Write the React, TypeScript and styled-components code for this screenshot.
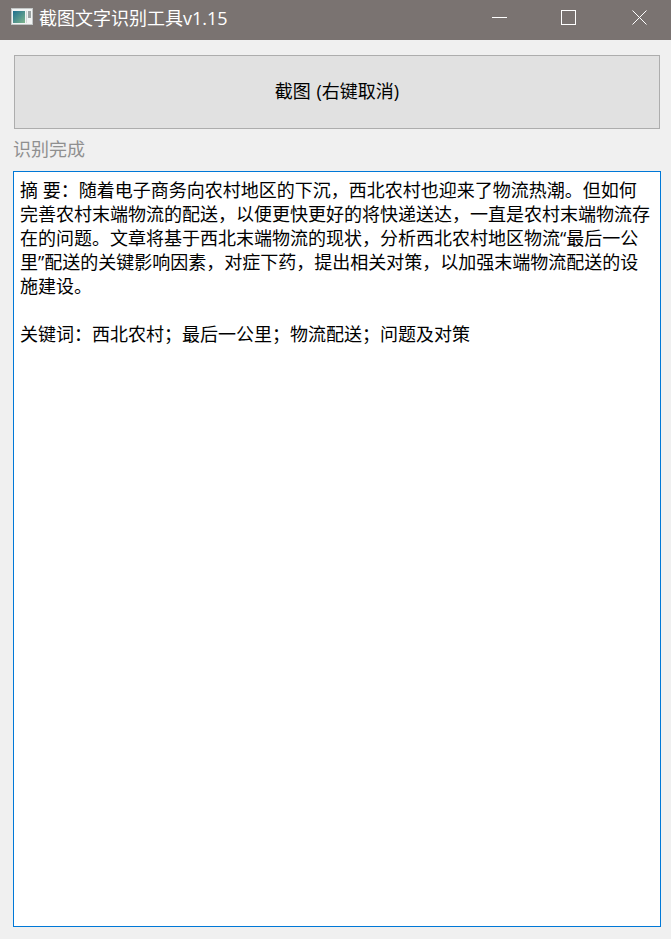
import React from "react";
import styled, { createGlobalStyle } from "styled-components";

const GlobalStyle = createGlobalStyle`
    html, body {
        margin: 0;
        padding: 0;
        height: 100%;
    }
    body {
        background: #f0f0f0;
        font-family: "Open Sans", "Noto Sans CJK SC", sans-serif;
    }
`;

const Window = styled.div`
    width: 671px;
    height: 939px;
    display: flex;
    flex-direction: column;
    background: #f0f0f0;
    overflow: hidden;
`;

const TitleBar = styled.div`
    height: 40px;
    flex: none;
    display: flex;
    align-items: flex-start;
    background: #7a7371;
    color: #ffffff;
`;

const AppIcon = styled.svg`
    width: 22px;
    height: 17px;
    margin: 8px 0 0 11px;
    flex: none;
`;

const Title = styled.div`
    margin: 6px 0 0 6px;
    flex: 1;
    font-size: 18px;
    line-height: 24px;
    white-space: nowrap;
`;

const WindowButtons = styled.div`
    display: flex;
    gap: 54px;
    padding: 10px 24px 0 0;
`;

const WindowGlyph = styled.svg`
    width: 15px;
    height: 15px;
    display: block;
`;

const MaximizeGlyph = styled(WindowGlyph)`
    margin-right: 2px;
`;

const Content = styled.div`
    flex: 1;
    display: flex;
    flex-direction: column;
    padding: 15px 10px 12px 13px;
    min-height: 0;
`;

const CaptureButton = styled.button`
    height: 74px;
    flex: none;
    margin: 0 1px;
    border: 1px solid #adadad;
    background: #e1e1e1;
    color: #000000;
    font-family: inherit;
    font-size: 18px;
    line-height: 24px;
    word-spacing: 1px;
    padding: 0 0 2px;
`;

const Status = styled.div`
    height: 24px;
    margin-top: 8px;
    margin-bottom: 1px;
    flex: none;
    font-size: 18px;
    line-height: 24px;
    color: #8f8f8f;
`;

const TextPanel = styled.div`
    flex: 1;
    margin-top: 9px;
    min-height: 0;
    box-sizing: border-box;
    border: 1px solid #0078d7;
    background: #ffffff;
    padding: 6px;
    color: #000000;
    font-size: 18px;
    line-height: 24px;
`;

const Line = styled.div`
    min-height: 24px;
    white-space: nowrap;
`;

const lines = [
    "摘 要：随着电子商务向农村地区的下沉，西北农村也迎来了物流热潮。但如何",
    "完善农村末端物流的配送，以便更快更好的将快递送达，一直是农村末端物流存",
    "在的问题。文章将基于西北末端物流的现状，分析西北农村地区物流“最后一公",
    "里”配送的关键影响因素，对症下药，提出相关对策，以加强末端物流配送的设",
    "施建设。",
    "",
    "关键词：西北农村；最后一公里；物流配送；问题及对策",
];

export default function App() {
    return (
        <Window>
            <GlobalStyle />
            <TitleBar>
                <AppIcon viewBox="0 0 22 17">
                    <defs>
                        <linearGradient id="panel" x1="0" y1="0" x2="1" y2="1">
                            <stop offset="0" stopColor="#1f6f8f" />
                            <stop offset="1" stopColor="#7fb58c" />
                        </linearGradient>
                    </defs>
                    <rect x="0.5" y="0.5" width="21" height="16" fill="#f2f4f4" stroke="#c2c6c6" />
                    <rect x="2" y="3" width="12" height="12" fill="url(#panel)" />
                    <rect x="15" y="3" width="1" height="12" fill="#d4d8d8" />
                    <rect x="17" y="3" width="3" height="7" fill="#9aa2a2" />
                </AppIcon>
                <Title>截图文字识别工具v1.15</Title>
                <WindowButtons>
                    <WindowGlyph viewBox="0 0 15 15">
                        <path d="M0 7.5H15" stroke="#fff" strokeWidth="1" />
                    </WindowGlyph>
                    <MaximizeGlyph viewBox="0 0 15 15">
                        <rect x="0.5" y="0.5" width="14" height="14" fill="none" stroke="#fff" strokeWidth="1" />
                    </MaximizeGlyph>
                    <WindowGlyph viewBox="0 0 15 15">
                        <path d="M0.5 0.5L14.5 14.5M14.5 0.5L0.5 14.5" stroke="#fff" strokeWidth="1" />
                    </WindowGlyph>
                </WindowButtons>
            </TitleBar>
            <Content>
                <CaptureButton>截图 (右键取消)</CaptureButton>
                <Status>识别完成</Status>
                <TextPanel>
                    {lines.map((line, i) => (
                        <Line key={i}>{line}</Line>
                    ))}
                </TextPanel>
            </Content>
        </Window>
    );
}
